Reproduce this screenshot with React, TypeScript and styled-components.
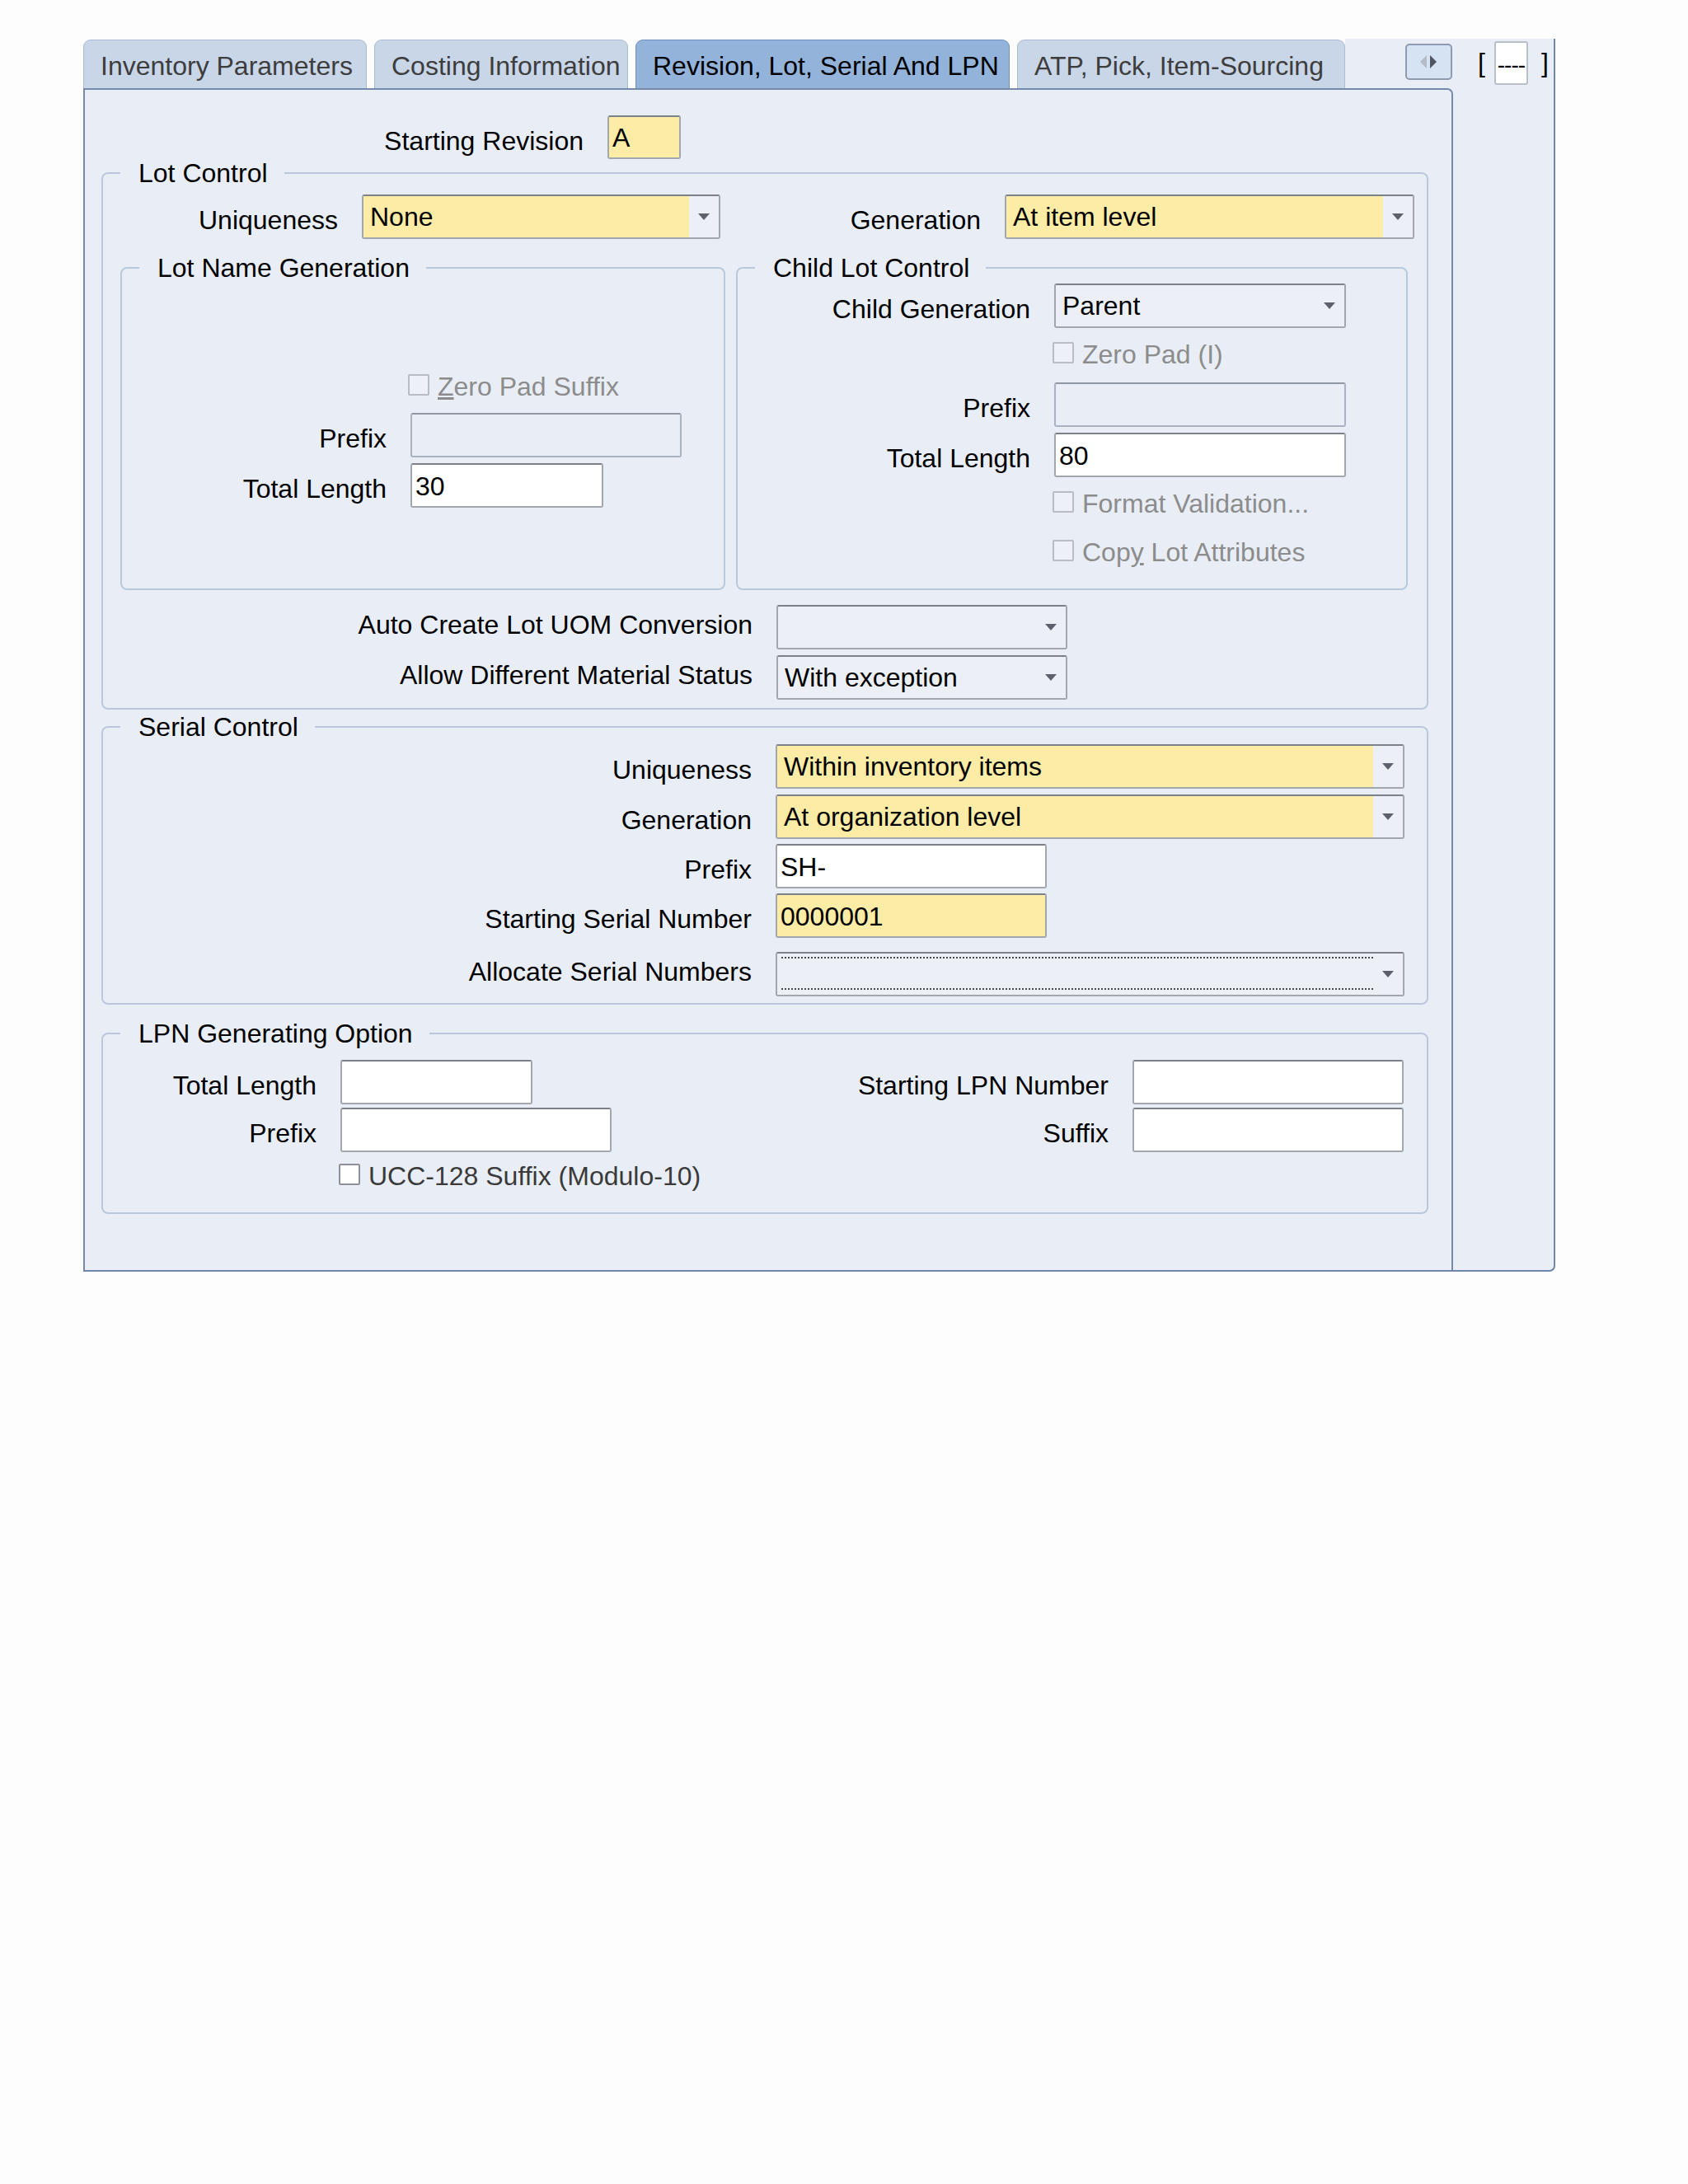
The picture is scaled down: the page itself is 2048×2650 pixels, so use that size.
import React from 'react';
import styled, { createGlobalStyle } from 'styled-components';

const GlobalStyle = createGlobalStyle`
  html, body {
    margin: 0;
    padding: 0;
    background: #fdfdfe;
  }
  body {
    font-family: "Liberation Sans", Arial, sans-serif;
    font-size: 32px;
    color: #000000;
  }
  * {
    box-sizing: border-box;
  }
`;

const Page = styled.div`
  width: 2048px;
  min-height: 2650px;
  padding: 47px 0 0 101px;
  background: #fdfdfe;
`;

const Frame = styled.div`
  display: flex;
  width: 1786px;
  height: 1496px;
  background: #e9eef6;
  border-right: 2px solid #6f85a9;
  border-bottom: 2px solid #6f85a9;
  border-bottom-right-radius: 7px;
`;

const MainCol = styled.div`
  display: flex;
  flex-direction: column;
  width: 1662px;
  flex: none;
`;

const TabStrip = styled.div`
  display: flex;
  align-items: flex-start;
  gap: 9px;
  height: 60px;
  background: #fdfdfe;
`;

const Tab = styled.div<{ $w: number; $active?: boolean }>`
  width: ${p => p.$w}px;
  height: 59px;
  margin-top: 1px;
  flex: none;
  padding: 6px 0 0 20px;
  line-height: 50px;
  white-space: nowrap;
  overflow: hidden;
  border: 1px solid ${p => (p.$active ? '#6f8fbf' : '#a9bbd4')};
  border-bottom: none;
  border-radius: 9px 9px 0 0;
  background: ${p => (p.$active ? '#93b3da' : '#c9d6e8')};
  color: ${p => (p.$active ? '#000000' : '#3d3d3d')};
`;

const StripFill = styled.div`
  flex: 1;
  align-self: stretch;
  display: flex;
  justify-content: flex-end;
  background: #e9eef6;
  margin-left: -9px;
`;

const ScrollButton = styled.div`
  width: 57px;
  height: 44px;
  margin: 6px 1px 0 0;
  border: 2px solid #8d9ab0;
  border-radius: 5px;
  background: #d6e3f3;
  display: flex;
  align-items: center;
  justify-content: center;
`;

const TabPanel = styled.div`
  flex: 1;
  border: 2px solid #7589ab;
  border-bottom: none;
  border-top-right-radius: 7px;
  background: #e9eef6;
  padding: 0 28px 0 20px;
`;

const Side = styled.div`
  flex: 1;
  display: flex;
  align-items: flex-start;
  padding: 3px 0 0 30px;
`;

const Bracket = styled.span`
  line-height: 53px;
  color: #000000;
`;

const DashBox = styled.div`
  width: 41px;
  height: 53px;
  margin: 0 16px 0 11px;
  border: 2px solid #b9bfc8;
  border-radius: 3px;
  background: #ffffff;
  font-size: 28px;
  line-height: 53px;
  letter-spacing: -1px;
  text-align: center;
  overflow: hidden;
`;

const Row = styled.div<{ $top?: number }>`
  display: flex;
  align-items: flex-start;
  margin-top: ${p => p.$top ?? 0}px;
`;

const SubRow = styled.div<{ $top: number }>`
  display: flex;
  gap: 13px;
  margin: ${p => p.$top}px 0 0 21px;
`;

const FieldWrap = styled.div`
  display: flex;
  align-items: flex-start;
  flex: none;
`;

const Label = styled.div<{ $w: number; $lift?: boolean }>`
  width: ${p => p.$w}px;
  flex: none;
  height: 54px;
  margin-right: 29px;
  padding-top: ${p => (p.$lift ? 1 : 8)}px;
  line-height: 46px;
  text-align: right;
  white-space: nowrap;
  color: #000000;
`;

type Tone = 'white' | 'yellow' | 'off';

const toneBg: Record<Tone, string> = {
  white: '#ffffff',
  yellow: '#fdeca6',
  off: '#e9eef6',
};

const TextBox = styled.div<{ $w: number; $h?: number; $tone: Tone }>`
  width: ${p => p.$w}px;
  height: ${p => p.$h ?? 54}px;
  flex: none;
  border: 2px solid ${p => (p.$tone === 'off' ? '#a9b2c0' : '#a2a7ae')};
  border-top-color: ${p => (p.$tone === 'off' ? '#8f97a3' : '#7c8188')};
  border-radius: 3px;
  background: ${p => toneBg[p.$tone]};
  padding: 2px 0 0 4px;
  line-height: ${p => (p.$h ?? 54) - 6}px;
  white-space: nowrap;
  overflow: hidden;
`;

const SelectBox = styled.div<{ $w: number }>`
  width: ${p => p.$w}px;
  height: 54px;
  flex: none;
  display: flex;
  border: 2px solid #a2a7ae;
  border-top-color: #7c8188;
  border-radius: 3px;
  background: #ecf0f6;
  overflow: hidden;
`;

const SelectValue = styled.div<{ $yellow?: boolean }>`
  flex: 1;
  background: ${p => (p.$yellow ? '#fdeca6' : 'transparent')};
  padding: 2px 0 0 8px;
  line-height: 46px;
  white-space: nowrap;
  overflow: hidden;
`;

const FocusRing = styled.div`
  height: 40px;
  margin: 2px 0 0 -3px;
  border-top: 2px dotted #4a4a4a;
  border-bottom: 2px dotted #4a4a4a;
`;

const SelectArrow = styled.div`
  width: 36px;
  flex: none;
  display: flex;
  align-items: center;
  justify-content: center;
`;

const Group = styled.fieldset<{ $pt?: number; $pb?: number; $w?: number; $h?: number; $top?: number }>`
  margin: ${p => p.$top ?? 0}px 0 0 0;
  padding: ${p => p.$pt ?? 0}px 0 ${p => p.$pb ?? 0}px 0;
  min-width: 0;
  width: ${p => (p.$w ? `${p.$w}px` : 'auto')};
  height: ${p => (p.$h ? `${p.$h}px` : 'auto')};
  border: 2px solid #b9c8dd;
  border-radius: 8px;
`;

const GroupTitle = styled.legend`
  margin-left: 21px;
  padding: 0 20px 0 22px;
  font-size: 32px;
  line-height: 32px;
  color: #000000;
  white-space: nowrap;
`;

const CheckRow = styled.div<{ $indent: number; $top: number }>`
  display: flex;
  align-items: center;
  gap: 10px;
  height: 36px;
  margin: ${p => p.$top}px 0 0 ${p => p.$indent}px;
`;

const CheckBox = styled.span<{ $disabled?: boolean }>`
  width: 26px;
  height: 26px;
  flex: none;
  border: 2px solid ${p => (p.$disabled ? '#b7bcc5' : '#8b9099')};
  border-radius: 2px;
  background: ${p => (p.$disabled ? '#edf1f7' : '#ffffff')};
`;

const CheckText = styled.span<{ $disabled?: boolean }>`
  padding-top: 4px;
  line-height: 32px;
  white-space: nowrap;
  color: ${p => (p.$disabled ? '#8c8c8c' : '#3a3a3a')};
`;

const Caret = () => (
  <svg width="14" height="8" viewBox="0 0 14 8">
    <path d="M0 0H14L7 8Z" fill="#5d616b" />
  </svg>
);

const ScrollArrows = () => (
  <svg width="30" height="20" viewBox="0 0 30 20">
    <path d="M12 2V18L4 10Z" fill="#b3bbc7" />
    <path d="M16 2V18L24 10Z" fill="#4f5561" />
  </svg>
);

interface FieldProps {
  label: string;
  lw: number;
  lift?: boolean;
  children: React.ReactNode;
}

const Field: React.FC<FieldProps> = ({ label, lw, lift, children }) => (
  <FieldWrap>
    <Label $w={lw} $lift={lift}>{label}</Label>
    {children}
  </FieldWrap>
);

interface SelectProps {
  w: number;
  value?: string;
  yellow?: boolean;
  focus?: boolean;
}

const Select: React.FC<SelectProps> = ({ w, value = '', yellow, focus }) => (
  <SelectBox $w={w}>
    <SelectValue $yellow={yellow}>{focus ? <FocusRing /> : value}</SelectValue>
    <SelectArrow>
      <Caret />
    </SelectArrow>
  </SelectBox>
);

interface CheckProps {
  indent: number;
  top: number;
  disabled?: boolean;
  children: React.ReactNode;
}

const Check: React.FC<CheckProps> = ({ indent, top, disabled, children }) => (
  <CheckRow $indent={indent} $top={top}>
    <CheckBox $disabled={disabled} />
    <CheckText $disabled={disabled}>{children}</CheckText>
  </CheckRow>
);

const tabs = [
  { label: 'Inventory Parameters', width: 344 },
  { label: 'Costing Information', width: 308 },
  { label: 'Revision, Lot, Serial And LPN', width: 454, active: true },
  { label: 'ATP, Pick, Item-Sourcing', width: 398 },
];

const App: React.FC = () => (
  <>
    <GlobalStyle />
    <Page>
      <Frame>
        <MainCol>
          <TabStrip>
            {tabs.map(t => (
              <Tab key={t.label} $w={t.width} $active={t.active}>
                {t.label}
              </Tab>
            ))}
            <StripFill>
              <ScrollButton>
                <ScrollArrows />
              </ScrollButton>
            </StripFill>
          </TabStrip>

          <TabPanel>
            <Row $top={31}>
              <Field label="Starting Revision" lw={585}>
                <TextBox $w={89} $h={53} $tone="yellow">A</TextBox>
              </Field>
            </Row>

            <Group $pt={10} $pb={10}>
              <GroupTitle>Lot Control</GroupTitle>
              <Row>
                <Field label="Uniqueness" lw={285}>
                  <Select w={435} value="None" yellow />
                </Field>
                <Field label="Generation" lw={316}>
                  <Select w={497} value="At item level" yellow />
                </Field>
              </Row>

              <SubRow $top={19}>
                <Group $w={734} $h={407}>
                  <GroupTitle>Lot Name Generation</GroupTitle>
                  <Check indent={347} top={108} disabled>
                    <u>Z</u>ero Pad Suffix
                  </Check>
                  <Row $top={16}>
                    <Field label="Prefix" lw={321}>
                      <TextBox $w={329} $tone="off" />
                    </Field>
                  </Row>
                  <Row $top={7}>
                    <Field label="Total Length" lw={321}>
                      <TextBox $w={234} $tone="white">30</TextBox>
                    </Field>
                  </Row>
                </Group>

                <Group $w={815} $h={407}>
                  <GroupTitle>Child Lot Control</GroupTitle>
                  <Row $top={3}>
                    <Field label="Child Generation" lw={355}>
                      <Select w={354} value="Parent" />
                    </Field>
                  </Row>
                  <Check indent={382} top={12} disabled>
                    Zero Pad (I)
                  </Check>
                  <Row $top={18}>
                    <Field label="Prefix" lw={355}>
                      <TextBox $w={354} $tone="off" />
                    </Field>
                  </Row>
                  <Row $top={7}>
                    <Field label="Total Length" lw={355}>
                      <TextBox $w={354} $tone="white">80</TextBox>
                    </Field>
                  </Row>
                  <Check indent={382} top={12} disabled>
                    Format Validation...
                  </Check>
                  <Check indent={382} top={23} disabled>
                    Cop<u>y</u> Lot Attributes
                  </Check>
                </Group>
              </SubRow>

              <Row $top={18}>
                <Field label="Auto Create Lot UOM Conversion" lw={788} lift>
                  <Select w={353} />
                </Field>
              </Row>
              <Row $top={7}>
                <Field label="Allow Different Material Status" lw={788} lift>
                  <Select w={353} value="With exception" />
                </Field>
              </Row>
            </Group>

            <Group $top={5} $pt={5} $pb={8}>
              <GroupTitle>Serial Control</GroupTitle>
              <Row>
                <Field label="Uniqueness" lw={787}>
                  <Select w={763} value="Within inventory items" yellow />
                </Field>
              </Row>
              <Row $top={7}>
                <Field label="Generation" lw={787}>
                  <Select w={763} value="At organization level" yellow />
                </Field>
              </Row>
              <Row $top={6}>
                <Field label="Prefix" lw={787}>
                  <TextBox $w={329} $tone="white">SH-</TextBox>
                </Field>
              </Row>
              <Row $top={6}>
                <Field label="Starting Serial Number" lw={787}>
                  <TextBox $w={329} $tone="yellow">0000001</TextBox>
                </Field>
              </Row>
              <Row $top={17}>
                <Field label="Allocate Serial Numbers" lw={787} lift>
                  <Select w={763} focus />
                </Field>
              </Row>
            </Group>

            <Group $top={19} $pt={16} $pb={28}>
              <GroupTitle>LPN Generating Option</GroupTitle>
              <Row>
                <Field label="Total Length" lw={259}>
                  <TextBox $w={233} $tone="white" />
                </Field>
                <Field label="Starting LPN Number" lw={699}>
                  <TextBox $w={329} $tone="white" />
                </Field>
              </Row>
              <Row $top={4}>
                <Field label="Prefix" lw={259}>
                  <TextBox $w={329} $tone="white" />
                </Field>
                <Field label="Suffix" lw={603}>
                  <TextBox $w={329} $tone="white" />
                </Field>
              </Row>
              <Check indent={286} top={9}>
                UCC-128 Suffix (Modulo-10)
              </Check>
            </Group>
          </TabPanel>
        </MainCol>

        <Side>
          <Bracket>[</Bracket>
          <DashBox>----</DashBox>
          <Bracket>]</Bracket>
        </Side>
      </Frame>
    </Page>
  </>
);

export default App;
